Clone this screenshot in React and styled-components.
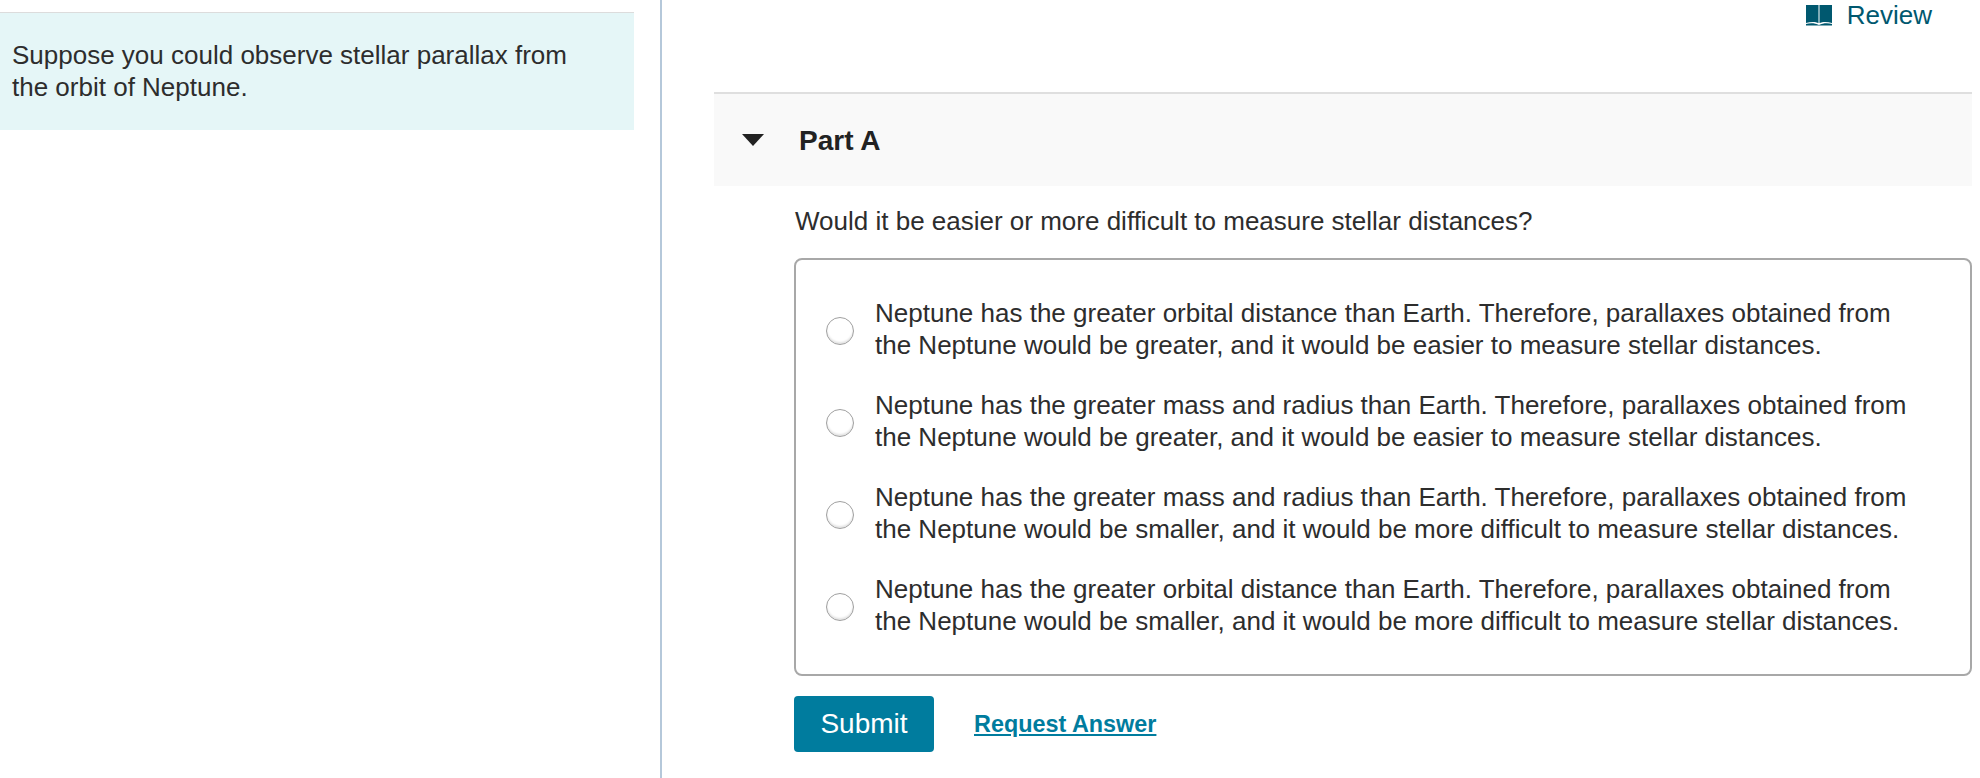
import styled, { createGlobalStyle } from 'styled-components'

const Global = createGlobalStyle`
  html, body {
    margin: 0;
    padding: 0;
    background: #fff;
  }
  body {
    font-family: "Liberation Sans", Arial, sans-serif;
    color: #2d2d2d;
  }
`

const Page = styled.div`
  display: grid;
  grid-template-columns: 660px 2px 1fr;
  width: 1980px;
  height: 778px;
  overflow: hidden;
`

const LeftPane = styled.div`
  padding: 12px 26px 0 0;
`

const Divider = styled.div`
  background: #b5c8da;
`

const IntroPanel = styled.div`
  box-sizing: border-box;
  width: 634px;
  height: 118px;
  padding: 26px 0 0 12px;
  background: #e5f6f7;
  border-top: 1px solid #dcdcdc;
  font-size: 26px;
  line-height: 32px;
`

const RightPane = styled.div`
  padding: 0 8px 0 52px;
`

const ReviewBar = styled.div`
  display: flex;
  justify-content: flex-end;
  align-items: center;
  gap: 15px;
  height: 30px;
  padding-right: 40px;
  color: #00586f;
  font-size: 26px;
`

const BookIcon = styled.svg`
  width: 26px;
  height: 21px;
  fill: #00586f;
`

const PartHeader = styled.div`
  display: flex;
  align-items: center;
  height: 94px;
  margin-top: 62px;
  background: #f9f9f9;
  border-top: 2px solid #dfdfdf;
  box-sizing: border-box;
  padding-left: 28px;
`

const Caret = styled.span`
  width: 0;
  height: 0;
  border-left: 11px solid transparent;
  border-right: 11px solid transparent;
  border-top: 12px solid #222;
  margin-right: 35px;
`

const PartTitle = styled.h2`
  margin: 0;
  padding-top: 2px;
  font-size: 28px;
  font-weight: 700;
  color: #222;
`

const Content = styled.div`
  padding: 20px 0 0 80px;
`

const Question = styled.p`
  margin: 0 0 21px 1px;
  font-size: 26px;
  line-height: 31px;
`

const OptionBox = styled.div`
  box-sizing: border-box;
  height: 418px;
  display: flex;
  flex-direction: column;
  gap: 28px;
  padding: 37px 51px 0 30px;
  border: 2px solid #a8a8a8;
  border-radius: 8px;
`

const Option = styled.label`
  display: flex;
  align-items: center;
  gap: 21px;
  font-size: 26px;
  line-height: 32px;
`

const Radio = styled.span`
  flex: none;
  box-sizing: border-box;
  width: 28px;
  height: 28px;
  margin-top: 4px;
  border: 1px solid #a0a0a0;
  border-radius: 50%;
  background: #fff;
  box-shadow: inset 0 -2px 2px #e4e4e4;
`

const Actions = styled.div`
  display: flex;
  align-items: center;
  gap: 40px;
  margin-top: 20px;
`

const SubmitButton = styled.button`
  width: 140px;
  height: 56px;
  padding: 0;
  border: 0;
  border-radius: 4px;
  background: #007c9e;
  color: #fff;
  font-family: inherit;
  font-size: 28px;
`

const AnswerLink = styled.a`
  color: #007c9e;
  font-size: 23.4px;
  font-weight: 700;
  text-decoration: underline;
`

const options = [
  'Neptune has the greater orbital distance than Earth. Therefore, parallaxes obtained from the Neptune would be greater, and it would be easier to measure stellar distances.',
  'Neptune has the greater mass and radius than Earth. Therefore, parallaxes obtained from the Neptune would be greater, and it would be easier to measure stellar distances.',
  'Neptune has the greater mass and radius than Earth. Therefore, parallaxes obtained from the Neptune would be smaller, and it would be more difficult to measure stellar distances.',
  'Neptune has the greater orbital distance than Earth. Therefore, parallaxes obtained from the Neptune would be smaller, and it would be more difficult to measure stellar distances.',
]

export default function App() {
  return (
    <Page>
      <Global />
      <LeftPane>
        <IntroPanel>
          Suppose you could observe stellar parallax from
          <br />
          the orbit of Neptune.
        </IntroPanel>
      </LeftPane>
      <Divider />
      <RightPane>
        <ReviewBar>
          <BookIcon viewBox="0 0 26 21">
            <path d="M0 0h12.500v18c-3-1.500-8-1.500-12.500 0zM13.500 0h12.500v18c-4.500-1.500-9.500-1.500-12.500 0z" />
            <path d="M0 19c4-1 9-1 13 1 4-2 9-2 13-1v1.500h-26z" />
          </BookIcon>
          Review
        </ReviewBar>
        <PartHeader>
          <Caret />
          <PartTitle>Part A</PartTitle>
        </PartHeader>
        <Content>
          <Question>Would it be easier or more difficult to measure stellar distances?</Question>
          <OptionBox>
            {options.map((text) => (
              <Option key={text}>
                <Radio />
                <span>{text}</span>
              </Option>
            ))}
          </OptionBox>
          <Actions>
            <SubmitButton>Submit</SubmitButton>
            <AnswerLink href="#">Request Answer</AnswerLink>
          </Actions>
        </Content>
      </RightPane>
    </Page>
  )
}
